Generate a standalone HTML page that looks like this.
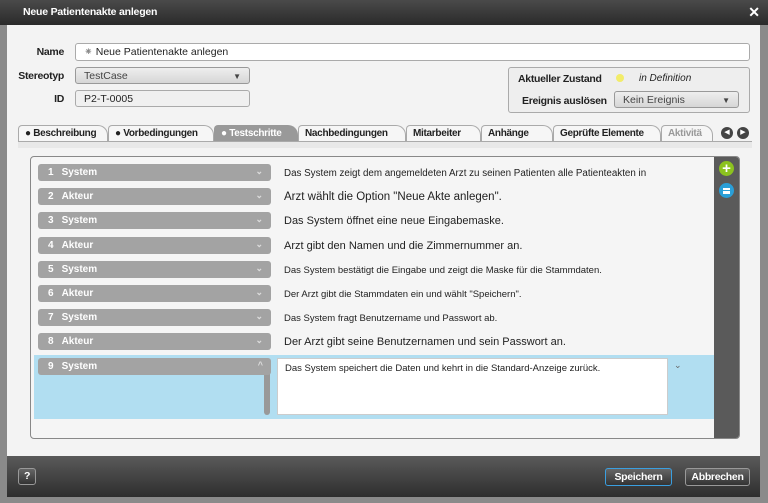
<!DOCTYPE html>
<html><head><meta charset="utf-8"><style>
*{box-sizing:border-box;margin:0;padding:0}
body{width:768px;height:503px;background:#8a8a8a;font-family:"Liberation Sans",sans-serif;position:relative;overflow:hidden;font-size:11px;color:#222}
.a{position:absolute;white-space:nowrap}
.title{left:0;top:0;width:768px;height:25px;background:linear-gradient(#4a4a4a,#2a2a2a);color:#fff;font-size:10.5px;font-weight:bold;padding:6px 0 0 23px;letter-spacing:-0.2px}
.body{left:7px;top:25px;width:753px;height:431px;background:#f3f3f3}
.lbl{font-weight:bold;font-size:10.5px;text-align:right;letter-spacing:-0.3px}
.inp{background:#fff;border:1px solid #aaa;border-radius:3px;font-size:10.5px;padding:2px 8px}
.sel{background:linear-gradient(#eee,#d6d6d6);border:1px solid #999;border-radius:3px;font-size:10.5px;padding:2px 8px;color:#444}
.tab{top:125px;height:16px;font-weight:bold;font-size:10px;letter-spacing:-0.3px;padding:2px 6px;border:1px solid #aaa;border-bottom:none;border-radius:4px 10px 0 0;background:#f6f6f6;overflow:hidden}
.pill{left:38px;width:233px;height:17px;background:#a3a3a3;border-radius:3px;color:#fff;font-weight:bold;font-size:10px;padding:3px 0 0 10px}
.pill span{margin-left:8px}
.pill i{position:absolute;right:8px;top:2px;font-style:normal;color:#ddd;font-size:9px}
.txt{left:284px}
.foot{left:7px;top:456px;width:753px;height:41px;background:linear-gradient(#5a5a5a,#2e2e2e)}
.btn{border:1px solid #999;border-radius:3px;background:linear-gradient(#666,#333);color:#fff;font-weight:bold;font-size:10.5px;text-align:center;letter-spacing:-0.3px}
</style></head><body>
<div class="a title">Neue Patientenakte anlegen</div>
<div class="a" style="right:8px;top:4px;color:#fff;font-size:14px;font-weight:bold">✕</div>
<div class="a body"></div>
<div class="a lbl" style="left:20px;top:46px;width:44px">Name</div>
<div class="a inp" style="left:75px;top:43px;width:675px;height:18px"><span style="color:#888">⁕</span> Neue Patientenakte anlegen</div>
<div class="a lbl" style="left:10px;top:70px;width:54px">Stereotyp</div>
<div class="a sel" style="left:75px;top:67px;width:175px;height:17px">TestCase<span style="float:right;font-size:8px;margin-top:2px">▼</span></div>
<div class="a lbl" style="left:20px;top:93px;width:44px">ID</div>
<div class="a inp" style="left:75px;top:90px;width:175px;height:17px;background:#f0f0f0">P2-T-0005</div>
<div class="a" style="left:508px;top:67px;width:242px;height:46px;border:1px solid #aaa;border-radius:3px;background:#eee"></div>
<div class="a lbl" style="left:518px;top:73px">Aktueller Zustand</div>
<div class="a" style="left:616px;top:74px;width:8px;height:8px;border-radius:50%;background:#f2ec6a"></div>
<div class="a" style="left:639px;top:73px;font-style:italic;font-size:10px">in Definition</div>
<div class="a lbl" style="left:522px;top:95px">Ereignis auslösen</div>
<div class="a sel" style="left:614px;top:91px;width:125px;height:17px">Kein Ereignis<span style="float:right;font-size:8px;margin-top:2px">▼</span></div>
<div class="a tab" style="left:18px;width:90px">● Beschreibung</div>
<div class="a tab" style="left:108px;width:106px">● Vorbedingungen</div>
<div class="a tab" style="left:214px;width:84px;background:#999;color:#fff;border-color:#999">● Testschritte</div>
<div class="a tab" style="left:298px;width:108px">Nachbedingungen</div>
<div class="a tab" style="left:406px;width:75px">Mitarbeiter</div>
<div class="a tab" style="left:481px;width:72px">Anhänge</div>
<div class="a tab" style="left:553px;width:108px">Geprüfte Elemente</div>
<div class="a tab" style="left:661px;width:52px;color:#999">Aktivitä</div>
<div class="a" style="left:721px;top:127px;width:12px;height:12px;border-radius:50%;background:#444;color:#fff;font-size:7px;text-align:center;line-height:12px">◀</div>
<div class="a" style="left:737px;top:127px;width:12px;height:12px;border-radius:50%;background:#444;color:#fff;font-size:7px;text-align:center;line-height:12px">▶</div>
<div class="a" style="left:18px;top:141px;width:734px;height:1px;background:#aaa"></div>
<div class="a" style="left:18px;top:142px;width:734px;height:6px;background:#e8e8e8"></div>
<div class="a" style="left:30px;top:156px;width:710px;height:283px;border:1px solid #888;border-radius:4px;background:#f5f5f5"></div>
<div class="a" style="left:714px;top:157px;width:25px;height:281px;background:#5a5a5a;border-radius:0 3px 3px 0"></div>
<div class="a" style="left:719px;top:161px;width:15px;height:15px;border-radius:50%;background:#8cc21f;color:#fff;font-weight:bold;font-size:15px;line-height:15px;text-align:center">+</div>
<div class="a" style="left:719px;top:183px;width:15px;height:15px;border-radius:50%;background:#2a9fd8"><div class="a" style="left:4px;top:5px;width:7px;height:2px;background:#fff"></div><div class="a" style="left:4px;top:8px;width:7px;height:3px;background:#fff"></div></div>

<div class="a pill" style="top:164px">1<span>System</span><i>⌄</i></div>
<div class="a txt" style="top:168px;font-size:9.8px">Das System zeigt dem angemeldeten Arzt zu seinen Patienten alle Patienteakten in</div>
<div class="a pill" style="top:188px">2<span>Akteur</span><i>⌄</i></div>
<div class="a txt" style="top:191px;font-size:11.5px">Arzt wählt die Option "Neue Akte anlegen".</div>
<div class="a pill" style="top:212px">3<span>System</span><i>⌄</i></div>
<div class="a txt" style="top:215px;font-size:11px">Das System öffnet eine neue Eingabemaske.</div>
<div class="a pill" style="top:237px">4<span>Akteur</span><i>⌄</i></div>
<div class="a txt" style="top:240px;font-size:11px">Arzt gibt den Namen und die Zimmernummer an.</div>
<div class="a pill" style="top:261px">5<span>System</span><i>⌄</i></div>
<div class="a txt" style="top:265px;font-size:9.5px">Das System bestätigt die Eingabe und zeigt die Maske für die Stammdaten.</div>
<div class="a pill" style="top:285px">6<span>Akteur</span><i>⌄</i></div>
<div class="a txt" style="top:289px;font-size:9.5px">Der Arzt gibt die Stammdaten ein und wählt "Speichern".</div>
<div class="a pill" style="top:309px">7<span>System</span><i>⌄</i></div>
<div class="a txt" style="top:313px;font-size:9.5px">Das System fragt Benutzername und Passwort ab.</div>
<div class="a pill" style="top:333px">8<span>Akteur</span><i>⌄</i></div>
<div class="a txt" style="top:336px;font-size:11px">Der Arzt gibt seine Benutzernamen und sein Passwort an.</div>

<div class="a" style="left:34px;top:355px;width:680px;height:64px;background:#b1def1"></div>
<div class="a" style="left:264px;top:358px;width:6px;height:57px;background:#999;border-radius:3px"></div>
<div class="a pill" style="top:358px">9<span>System</span><i>^</i></div>
<div class="a" style="left:277px;top:358px;width:391px;height:57px;background:#fff;border:1px solid #ccc;font-size:9.5px;padding:4px 7px">Das System speichert die Daten und kehrt in die Standard-Anzeige zurück.</div>
<div class="a" style="left:674px;top:360px;color:#666;font-size:9px">⌄</div>

<div class="a foot"></div>
<div class="a btn" style="left:18px;top:468px;width:18px;height:17px;line-height:15px">?</div>
<div class="a btn" style="left:605px;top:468px;width:67px;height:18px;line-height:16px;border-color:#3a9fe0">Speichern</div>
<div class="a btn" style="left:685px;top:468px;width:65px;height:18px;line-height:16px">Abbrechen</div>
</body></html>
